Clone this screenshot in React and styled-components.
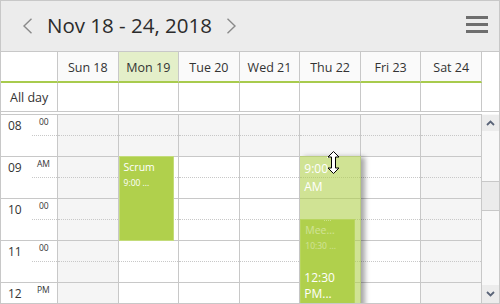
import React from 'react';
import styled, { createGlobalStyle } from 'styled-components';

const GlobalStyle = createGlobalStyle`
  html, body {
    margin: 0;
    padding: 0;
    background: #fff;
  }
  body {
    font-family: "Open Sans", "Noto Sans", sans-serif;
  }
`;

const LINE = '#c8c8c8';
const GREEN = '#a8cb4d';
const EVENT = '#b0d04c';
const SHADE = '#f5f5f5';

const Scheduler = styled.div`
  width: 500px;
  height: 304px;
  box-sizing: border-box;
  border: 1px solid ${LINE};
  display: flex;
  flex-direction: column;
  overflow: hidden;
  color: #333;
`;

const Toolbar = styled.div`
  height: 51px;
  flex-shrink: 0;
  box-sizing: border-box;
  border-bottom: 1px solid ${LINE};
  background: #ececec;
  display: flex;
  align-items: center;
  padding: 0 11px 0 21px;
`;

const NavButton = styled.span`
  display: flex;
  width: 11px;
  height: 16px;
  svg {
    display: block;
  }
`;

const Title = styled.div`
  margin: 0 14px 0 14px;
  font-size: 20.5px;
  line-height: 1;
  color: #2b2b2b;
  padding-bottom: 1px;
`;

const Menu = styled.div`
  margin-left: auto;
  width: 22px;
  height: 17px;
  display: flex;
  flex-direction: column;
  justify-content: space-between;
  margin-top: -3px;
`;

const MenuBar = styled.span`
  display: block;
  height: 3px;
  background: #6e6e6e;
`;

const HeadRow = styled.div`
  display: grid;
  grid-template-columns: 57px repeat(7, 1fr) 17px;
  flex-shrink: 0;
`;

const HeadCell = styled.div`
  height: 31px;
  box-sizing: border-box;
  border-right: 1px solid ${LINE};
  border-bottom: 2px solid ${GREEN};
  background: ${(p) => (p.$today ? '#e4efc9' : p.$blank ? '#fff' : '#fafafa')};
  display: flex;
  align-items: center;
  justify-content: center;
  font-size: 12.5px;
  padding-top: 2px;
`;

const AllDayCell = styled.div`
  height: 29px;
  box-sizing: border-box;
  border-right: 1px solid ${LINE};
  border-bottom: 1px solid ${LINE};
  background: #fff;
  display: flex;
  align-items: center;
  font-size: 12.5px;
  padding-left: 9px;
`;

const Spacer = styled.div`
  background: #fff;
  box-sizing: border-box;
  border-bottom: ${(p) => (p.$line ? `1px solid ${LINE}` : 'none')};
`;

const Gap = styled.div`
  height: 2px;
  flex-shrink: 0;
`;

const Body = styled.div`
  flex: 1;
  min-height: 0;
  display: flex;
`;

const Slots = styled.div`
  flex: 1;
  display: grid;
  grid-template-columns: 57px repeat(7, 1fr);
  border-top: 1px solid ${LINE};
  overflow: hidden;
`;

const TimeColumn = styled.div`
  border-right: 1px solid ${LINE};
  background: #fff;
`;

const TimeCell = styled.div`
  height: 42px;
  box-sizing: border-box;
  border-bottom: 1px solid ${LINE};
  flex-shrink: 0;
`;

const TimeTop = styled.div`
  height: 21px;
  display: flex;
`;

const HourNum = styled.div`
  width: 31px;
  box-sizing: border-box;
  padding: 3px 0 0 7px;
  font-size: 12px;
  line-height: 16px;
  color: #333;
`;

const Minutes = styled.div`
  flex: 1;
  box-sizing: border-box;
  border-bottom: 1px dotted ${LINE};
  font-size: 8.5px;
  line-height: 10px;
  padding: 2px 0 0 ${(p) => (p.$suffix ? '5px' : '7px')};
  color: #333;
`;

const DayColumn = styled.div`
  position: relative;
  border-right: 1px solid ${LINE};
  min-width: 0;
`;

const HourSlot = styled.div`
  height: 42px;
  box-sizing: border-box;
  background: ${(p) => (p.$shade ? SHADE : '#fff')};
  border-bottom: 1px solid ${LINE};
`;

const HalfLine = styled.div`
  height: 21px;
  box-sizing: border-box;
  border-bottom: 1px dotted ${LINE};
`;

const Event = styled.div`
  position: absolute;
  left: 0;
  top: ${(p) => p.$top}px;
  height: ${(p) => p.$height}px;
  width: 55px;
  box-sizing: border-box;
  background: ${EVENT};
  border: 1px solid #c3dc7a;
  color: #fff;
  padding: ${(p) => (p.$flush ? '0' : '3px')} 4px 0 4px;
  display: flex;
  flex-direction: column;
  z-index: 1;
`;

const EventTitle = styled.div`
  font-size: 10.5px;
  line-height: 15px;
  white-space: nowrap;
`;

const EventTime = styled.div`
  font-size: 8.5px;
  line-height: 12px;
  margin-top: 2px;
  white-space: nowrap;
`;

const Handle = styled.div`
  width: 7px;
  margin: 0 auto 2px auto;
  border-top: 1px dotted rgba(255, 255, 255, 0.9);
`;

const Ghost = styled.div`
  position: absolute;
  left: 0;
  top: 41px;
  width: calc(100% + 1px);
  height: 152px;
  box-sizing: border-box;
  background: rgba(176, 208, 76, 0.6);
  box-shadow: 4px 1px 5px rgba(0, 0, 0, 0.35);
  color: #fff;
  padding: 1px 4px 6px 4px;
  display: flex;
  flex-direction: column;
  z-index: 2;
`;

const GhostLabel = styled.div`
  font-size: 12px;
  line-height: ${(p) => (p.$end ? '16px' : '18px')};
  margin-top: ${(p) => (p.$end ? 'auto' : '0')};
`;

const Cursor = styled.svg`
  position: absolute;
  left: 27px;
  top: 36px;
  z-index: 3;
`;

const ScrollBar = styled.div`
  width: 17px;
  flex-shrink: 0;
  display: flex;
  flex-direction: column;
  background: #f8f8f8;
`;

const ScrollButton = styled.div`
  height: ${(p) => p.$h}px;
  margin-top: ${(p) => (p.$up ? '1px' : 'auto')};
  background: #ececec;
  display: flex;
  align-items: center;
  justify-content: center;
  flex-shrink: 0;
`;

const Thumb = styled.div`
  margin-top: 50px;
  height: 30px;
  box-sizing: border-box;
  background: #ebebeb;
  border-top: 1px solid ${LINE};
  border-bottom: 1px solid ${LINE};
`;

const days = [
  { label: 'Sun 18', weekend: true },
  { label: 'Mon 19', today: true },
  { label: 'Tue 20' },
  { label: 'Wed 21' },
  { label: 'Thu 22' },
  { label: 'Fri 23' },
  { label: 'Sat 24', weekend: true },
];

const hours = [
  { num: '08', min: '00', off: true },
  { num: '09', min: 'AM', suffix: true },
  { num: '10', min: '00' },
  { num: '11', min: '00' },
  { num: '12', min: 'PM', suffix: true },
];

const Chevron = ({ dir }) => (
  <svg width="11" height="16" viewBox="0 0 11 16">
    <polyline
      points={dir === 'left' ? '9.5,0.8 2,8 9.5,15.2' : '1.5,0.8 9,8 1.5,15.2'}
      fill="none"
      stroke="#8a8a8a"
      strokeWidth="1.4"
    />
  </svg>
);

const SmallChevron = ({ up }) => (
  <svg width="9" height="6" viewBox="0 0 9 6">
    <polyline
      points={up ? '1,5 4.5,1.5 8,5' : '1,1 4.5,4.5 8,1'}
      fill="none"
      stroke="#5a6478"
      strokeWidth="1.8"
    />
  </svg>
);

const App = () => {
  return (
    <>
      <GlobalStyle />
      <Scheduler>
        <Toolbar>
          <NavButton>
            <Chevron dir="left" />
          </NavButton>
          <Title>Nov 18 - 24, 2018</Title>
          <NavButton>
            <Chevron dir="right" />
          </NavButton>
          <Menu>
            <MenuBar />
            <MenuBar />
            <MenuBar />
          </Menu>
        </Toolbar>

        <HeadRow>
          <HeadCell $blank />
          {days.map((d) => (
            <HeadCell key={d.label} $today={d.today}>
              {d.label}
            </HeadCell>
          ))}
          <Spacer />
        </HeadRow>

        <HeadRow>
          <AllDayCell>All day</AllDayCell>
          {days.map((d) => (
            <AllDayCell key={d.label} />
          ))}
          <Spacer $line />
        </HeadRow>
        <Gap />

        <Body>
          <Slots>
            <TimeColumn>
              {hours.map((h) => (
                <TimeCell key={h.num}>
                  <TimeTop>
                    <HourNum>{h.num}</HourNum>
                    <Minutes $suffix={h.suffix}>{h.min}</Minutes>
                  </TimeTop>
                </TimeCell>
              ))}
            </TimeColumn>

            {days.map((d) => (
              <DayColumn key={d.label}>
                {hours.map((h) => (
                  <HourSlot key={h.num} $shade={d.weekend || h.off}>
                    <HalfLine />
                  </HourSlot>
                ))}

                {d.label === 'Mon 19' && (
                  <Event $top={41} $height={85}>
                    <EventTitle>Scrum</EventTitle>
                    <EventTime>9:00 ...</EventTime>
                  </Event>
                )}

                {d.label === 'Thu 22' && (
                  <>
                    <Event $top={104} $height={90} $flush>
                      <Handle />
                      <EventTitle>Mee...</EventTitle>
                      <EventTime>10:30 ...</EventTime>
                    </Event>
                    <Ghost>
                      <Handle />
                      <GhostLabel>
                        9:00
                        <br />
                        AM
                      </GhostLabel>
                      <GhostLabel $end>
                        12:30
                        <br />
                        PM...
                      </GhostLabel>
                    </Ghost>
                    <Cursor width="13" height="23" viewBox="0 0 13 23">
                      <polygon
                        points="6.5,0.5 12,6 8.5,6 8.5,17 12,17 6.5,22.5 1,17 4.5,17 4.5,6 1,6"
                        fill="#fff"
                        stroke="#000"
                        strokeWidth="1"
                      />
                    </Cursor>
                  </>
                )}
              </DayColumn>
            ))}
          </Slots>

          <ScrollBar>
            <ScrollButton $up $h={16}>
              <SmallChevron up />
            </ScrollButton>
            <Thumb />
            <ScrollButton $h={18}>
              <SmallChevron />
            </ScrollButton>
          </ScrollBar>
        </Body>
      </Scheduler>
    </>
  );
};

export default App;
